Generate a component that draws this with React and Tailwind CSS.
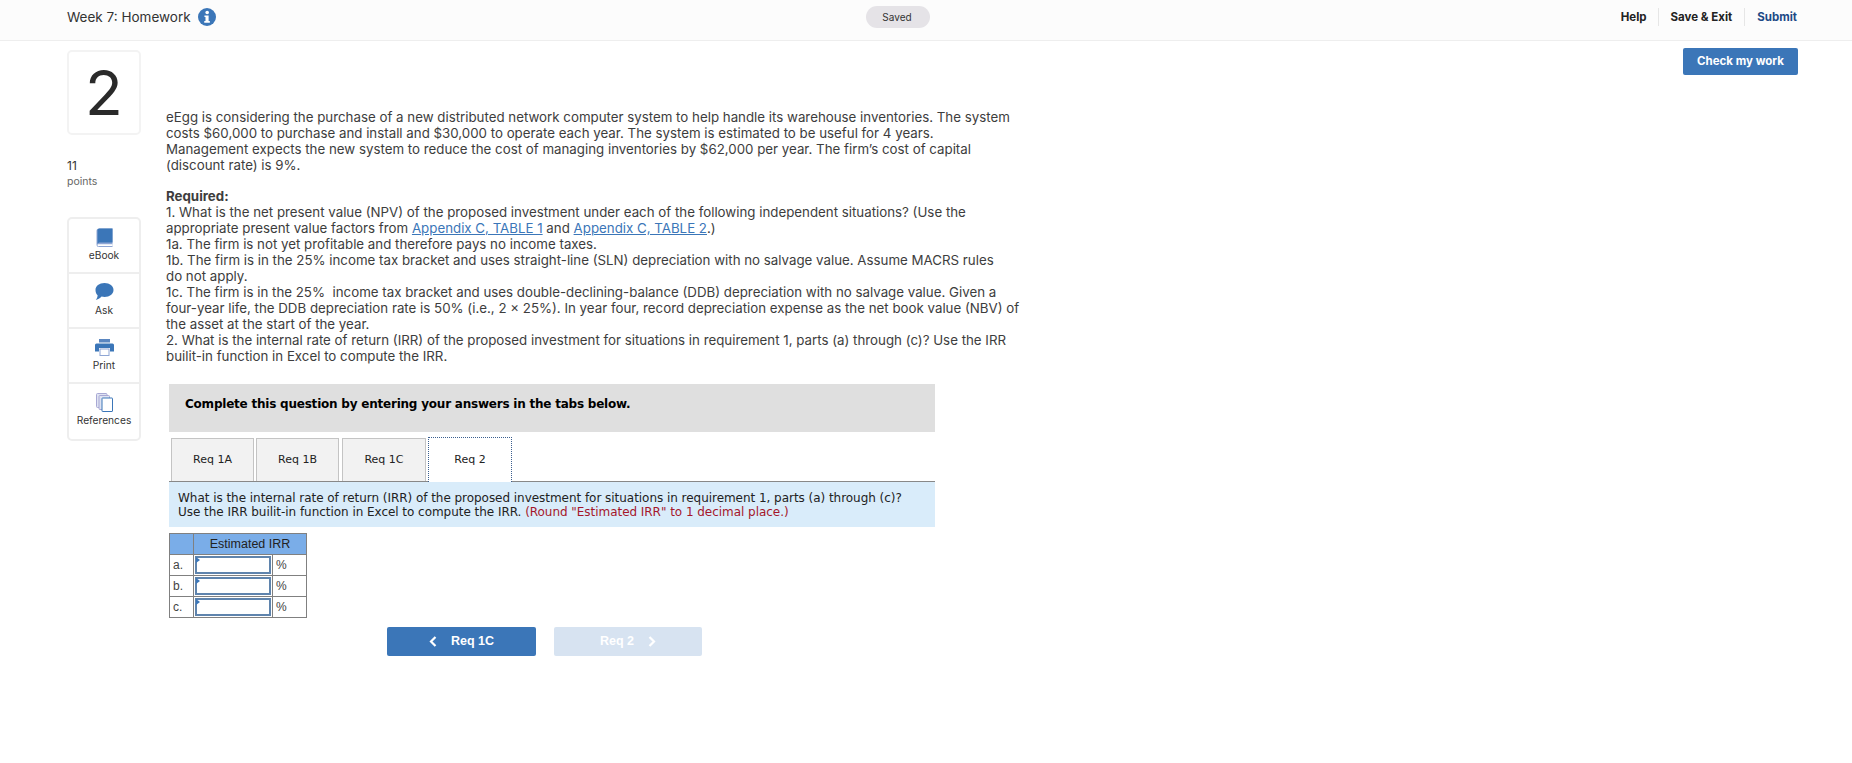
import React from "react";

function InfoIcon() {
  return (
    <svg width="18" height="18" viewBox="0 0 19 19">
      <circle cx="9.5" cy="9.5" r="9.500" fill="#3b76b8" />
      <circle cx="9.700" cy="4.800" r="1.900" fill="#fff" />
      <path d="M6.800 7.800h4.400v6h1.300v1.700H6.600v-1.700h1.300V9.500H6.800z" fill="#fff" />
    </svg>
  );
}

function BookIcon() {
  return (
    <svg width="17" height="19" viewBox="0 0 17 19">
      <path d="M.5 3A2.500 2.500 0 0 1 3 .5h13.500V19H3a2.500 2.500 0 0 1-2.500-2.500z" fill="#8fa6d4" />
      <path d="M1.500 3A2 2 0 0 1 3.500.5h13v14H3.500a2 2 0 0 0-2 1.500z" fill="#3b76b8" />
      <path d="M2 16.200h14.500v1.800H3a1 1 0 0 1-1-1.800z" fill="#fff" />
    </svg>
  );
}
function ChatIcon() {
  return (
    <svg width="19" height="18" viewBox="0 0 19 18">
      <path d="M9.500 0C14.700 0 18.500 3 18.500 7s-3.800 7-9 7c-1 0-2-.1-2.900-.4C5.400 15 3.500 16.500.8 17c1-1.200 1.700-2.800 1.800-4.800C1.200 11 .5 9.100.5 7c0-4 3.800-7 9-7z" fill="#3b76b8" />
    </svg>
  );
}
function PrintIcon() {
  return (
    <svg width="19" height="17" viewBox="0 0 19 17">
      <path d="M4 0h11v3.500H4z" fill="#5a86c0" />
      <path d="M1.500 4.500h16A1.500 1.500 0 0 1 19 6v6.500h-4V9H4v3.500H0V6A1.500 1.500 0 0 1 1.500 4.500z" fill="#3b76b8" />
      <rect x="5" y="10" width="9" height="6.500" fill="#fff" stroke="#8fa6d4" />
    </svg>
  );
}
function RefIcon() {
  return (
    <svg width="17" height="19" viewBox="0 0 17 19">
      <rect x="0.500" y="0.500" width="10.500" height="14" rx="1" fill="#dfe3f2" stroke="#a8a8d4" />
      <rect x="3" y="2.500" width="10.500" height="14" rx="1" fill="#dfe3f2" stroke="#a8a8d4" />
      <rect x="6" y="5" width="10.500" height="13.500" rx="0.500" fill="#fff" stroke="#3b76b8" />
    </svg>
  );
}
function Chev({ right }) {
  return (
    <svg width="8" height="11" viewBox="0 0 8 11" fill="none" stroke="currentColor" strokeWidth="2.200">
      <path d={right ? "M1.500 1l4.500 4.500L1.500 10" : "M6.500 1L2 5.500 6.500 10"} />
    </svg>
  );
}

function SideItem({ icon, label, last }) {
  return (
    <div className={`h-[55px] flex flex-col items-center pt-[8px] ${last ? "" : "border-b-2 border-[#eeeeee]"}`}>
      <div className="h-[20px] flex items-center justify-center">{icon}</div>
      <span className="mt-[1px] text-[10.200px] leading-[14px] text-[#333]">{label}</span>
    </div>
  );
}

function Row({ label }) {
  return (
    <tr className="h-[21px]">
      <td className="border border-[#808080] pl-[3px] text-[#444]">{label}</td>
      <td className="border border-[#808080] p-0">
        <div className="relative h-[18px] mx-[1px] border-2 border-[#5f84ad]">
          <div className="absolute -left-[1px] -top-[1px] w-0 h-0 border-y-[3px] border-y-transparent border-l-[4px] border-l-[#3b76b8]" />
        </div>
      </td>
      <td className="border border-[#808080] pl-[3px] text-[#444]">%</td>
    </tr>
  );
}

export default function App() {
  const tabBase = "bg-[#f2f2f2] border border-[#c4c4c4] border-b-0 pt-[1px] flex items-center justify-center";
  return (
    <div className="w-[1852px] h-[763px] bg-white text-[#333] overflow-hidden font-['Inter',sans-serif]">
      <header className="h-[41px] bg-[#fcfcfc] border-b border-[#eeeeee] flex items-start pl-[67px] pr-[55px]">
        <div className="w-[799px] flex items-center h-[34px]">
          <span className="text-[13.500px] text-[#333]">Week 7: Homework</span>
          <span className="ml-[7px] flex"><InfoIcon /></span>
        </div>
        <div className="mt-[6px] w-[64px] h-[22px] rounded-full bg-[#e5e3e7] flex items-center justify-center text-[10px] text-[#333] pr-[2px]">Saved</div>
        <nav className="ml-auto mt-[8px] flex items-center text-[11.500px] font-bold">
          <span className="text-[#222] pr-[11px] border-r border-[#e6e6e6] leading-[18px]">Help</span>
          <span className="text-[#222] px-[12px] border-r border-[#e6e6e6] leading-[18px]">Save &amp; Exit</span>
          <span className="text-[#1d4a86] pl-[12px] leading-[18px]">Submit</span>
        </nav>
      </header>

      <main className="flex pl-[67px] pr-[54px]">
        <aside className="w-[74px] shrink-0 pt-[9px]">
          <div className="h-[85px] border-2 border-[#f3f3f3] rounded-[5px] flex items-center justify-center text-[62px] leading-none text-[#2a2a2a]">2</div>
          <div className="mt-[23px] text-[12px] leading-[16px]">11</div>
          <div className="text-[10.500px] leading-[16px] text-[#666]">points</div>
          <div className="mt-[27px] border-2 border-[#eeeeee] rounded-[5px]">
            <SideItem icon={<BookIcon />} label="eBook" />
            <SideItem icon={<ChatIcon />} label="Ask" />
            <SideItem icon={<PrintIcon />} label="Print" />
            <SideItem icon={<RefIcon />} label="References" last />
          </div>
        </aside>

        <section className="w-[769px] ml-[25px] pt-[68px]">
          <div className="text-[13.300px] leading-[16px] text-[#3d3d3d] w-[880px]">
            <p>eEgg is considering the purchase of a new distributed network computer system to help handle its warehouse inventories. The system<br />costs $60,000 to purchase and install and $30,000 to operate each year. The system is estimated to be useful for 4 years.<br />Management expects the new system to reduce the cost of managing inventories by $62,000 per year. The firm’s cost of capital<br />(discount rate) is 9%.</p>
            <p className="mt-[15px] font-bold">Required:</p>
            <p>1. What is the net present value (NPV) of the proposed investment under each of the following independent situations? (Use the<br />appropriate present value factors from <span className="text-[#3b76b8] underline">Appendix C, TABLE 1</span> and <span className="text-[#3b76b8] underline">Appendix C, TABLE 2</span>.)<br />1a. The firm is not yet profitable and therefore pays no income taxes.<br />1b. The firm is in the 25% income tax bracket and uses straight-line (SLN) depreciation with no salvage value. Assume MACRS rules<br />do not apply.<br />1c. The firm is in the 25%&nbsp; income tax bracket and uses double-declining-balance (DDB) depreciation with no salvage value. Given a<br />four-year life, the DDB depreciation rate is 50% (i.e., 2 × 25%). In year four, record depreciation expense as the net book value (NBV) of<br />the asset at the start of the year.<br />2. What is the internal rate of return (IRR) of the proposed investment for situations in requirement 1, parts (a) through (c)? Use the IRR<br />builit-in function in Excel to compute the IRR.</p>
          </div>

          <div className="ml-[3px] mt-[20px] w-[766px] font-['DejaVu_Sans',sans-serif]">
            <div className="h-[48px] bg-[#dfdfdf] pl-[16px] pt-[12px] text-[12px] tracking-[-0.22px] leading-[16px] font-bold text-black">Complete this question by entering your answers in the tabs below.</div>
            <div className="mt-[6px] pl-[2px] flex border-b border-[#888] h-[44px] text-[#222] text-[11px]">
              <div className={`w-[83px] h-[43px] ${tabBase}`}>Req 1A</div>
              <div className={`w-[83px] h-[43px] ml-[2px] ${tabBase}`}>Req 1B</div>
              <div className={`w-[84px] h-[43px] ml-[3px] ${tabBase}`}>Req 1C</div>
              <div className="w-[84px] h-[45px] ml-[2px] -mt-[1px] relative bg-white border border-dotted border-[#3b5f8f] border-b-0 flex items-center justify-center pt-[1px]">Req 2</div>
            </div>
            <div className="h-[45px] bg-[#d9ecfa] pl-[9px] pt-[9px] text-[12px] tracking-[-0.04px] leading-[14px] text-[#222]">
              What is the internal rate of return (IRR) of the proposed investment for situations in requirement 1, parts (a) through (c)?<br />
              Use the IRR builit-in function in Excel to compute the IRR. <span className="text-[#a5172b]">(Round "Estimated IRR" to 1 decimal place.)</span>
            </div>
            <table className="mt-[6px] border-collapse table-fixed w-[137px] font-['Liberation_Sans',sans-serif] text-[12px]">
              <colgroup><col className="w-[24px]" /><col className="w-[79px]" /><col className="w-[34px]" /></colgroup>
              <thead>
                <tr className="h-[21px] bg-[#7aade8] text-[#222]">
                  <th className="border border-[#808080] font-normal"></th>
                  <th colSpan={2} className="border border-[#808080] font-normal text-[12.500px]">Estimated IRR</th>
                </tr>
              </thead>
              <tbody>
                <Row label="a." />
                <Row label="b." />
                <Row label="c." />
              </tbody>
            </table>
            <div className="mt-[9px] ml-[218px] flex gap-[18px] font-['Liberation_Sans',sans-serif] text-[12.500px] font-bold text-white">
              <button className="w-[149px] h-[29px] rounded-[2px] bg-[#3b76b8] flex items-center justify-center gap-[14px]">
                <Chev />Req 1C
              </button>
              <button className="w-[148px] h-[29px] rounded-[2px] bg-[#d7e3f1] flex items-center justify-center gap-[14px]">
                Req 2<Chev right />
              </button>
            </div>
          </div>
        </section>

        <div className="ml-auto pt-[6px]">
          <button className="w-[115px] h-[27px] rounded-[2px] bg-[#3b76b8] text-white text-[11.500px] font-bold">Check my work</button>
        </div>
      </main>
    </div>
  );
}
